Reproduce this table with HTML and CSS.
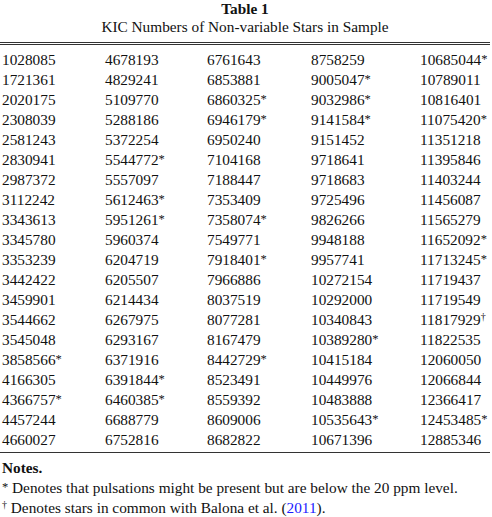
FILE: index.html
```html
<!DOCTYPE html>
<html>
<head>
<meta charset="utf-8">
<link rel="stylesheet" href="styles.css">
</head>
<body>
<div class="table-wrap">
  <div class="caption">
    <div class="cap-title">Table 1</div>
    <div class="cap-sub">KIC Numbers of Non-variable Stars in Sample</div>
  </div>
  <div class="rule-double"></div>
  <div class="grid">
    <span>1028085</span><span>4678193</span><span>6761643</span><span>8758259</span><span>10685044<sup class="ast">*</sup></span>
    <span>1721361</span><span>4829241</span><span>6853881</span><span>9005047<sup class="ast">*</sup></span><span>10789011</span>
    <span>2020175</span><span>5109770</span><span>6860325<sup class="ast">*</sup></span><span>9032986<sup class="ast">*</sup></span><span>10816401</span>
    <span>2308039</span><span>5288186</span><span>6946179<sup class="ast">*</sup></span><span>9141584<sup class="ast">*</sup></span><span>11075420<sup class="ast">*</sup></span>
    <span>2581243</span><span>5372254</span><span>6950240</span><span>9151452</span><span>11351218</span>
    <span>2830941</span><span>5544772<sup class="ast">*</sup></span><span>7104168</span><span>9718641</span><span>11395846</span>
    <span>2987372</span><span>5557097</span><span>7188447</span><span>9718683</span><span>11403244</span>
    <span>3112242</span><span>5612463<sup class="ast">*</sup></span><span>7353409</span><span>9725496</span><span>11456087</span>
    <span>3343613</span><span>5951261<sup class="ast">*</sup></span><span>7358074<sup class="ast">*</sup></span><span>9826266</span><span>11565279</span>
    <span>3345780</span><span>5960374</span><span>7549771</span><span>9948188</span><span>11652092<sup class="ast">*</sup></span>
    <span>3353239</span><span>6204719</span><span>7918401<sup class="ast">*</sup></span><span>9957741</span><span>11713245<sup class="ast">*</sup></span>
    <span>3442422</span><span>6205507</span><span>7966886</span><span>10272154</span><span>11719437</span>
    <span>3459901</span><span>6214434</span><span>8037519</span><span>10292000</span><span>11719549</span>
    <span>3544662</span><span>6267975</span><span>8077281</span><span>10340843</span><span>11817929<sup class="dag">†</sup></span>
    <span>3545048</span><span>6293167</span><span>8167479</span><span>10389280<sup class="ast">*</sup></span><span>11822535</span>
    <span>3858566<sup class="ast">*</sup></span><span>6371916</span><span>8442729<sup class="ast">*</sup></span><span>10415184</span><span>12060050</span>
    <span>4166305</span><span>6391844<sup class="ast">*</sup></span><span>8523491</span><span>10449976</span><span>12066844</span>
    <span>4366757<sup class="ast">*</sup></span><span>6460385<sup class="ast">*</sup></span><span>8559392</span><span>10483888</span><span>12366417</span>
    <span>4457244</span><span>6688779</span><span>8609006</span><span>10535643<sup class="ast">*</sup></span><span>12453485<sup class="ast">*</sup></span>
    <span>4660027</span><span>6752816</span><span>8682822</span><span>10671396</span><span>12885346</span>
  </div>
  <div class="rule-single"></div>
  <div class="notes">
    <div class="notes-title">Notes.</div>
    <div class="note"><sup class="ast">*</sup> Denotes that pulsations might be present but are below the 20 ppm level.</div>
    <div class="note"><sup class="dag">†</sup> Denotes stars in common with Balona et al. (<span class="cite">2011</span>).</div>
  </div>
</div>
</body>
</html>
```
FILE: styles.css
```css
html, body {
  margin: 0;
  padding: 0;
  background: #fff;
}
body {
  font-family: "Liberation Serif", "Times New Roman", serif;
  font-size: 15.3px;
  color: #111;
}
.table-wrap {
  width: 490px;
}
.caption {
  text-align: center;
  line-height: 17.5px;
}
.cap-title {
  font-weight: bold;
}
.rule-double {
  margin-top: 7px;
  height: 1px;
  border-top: 1px solid #333;
  border-bottom: 1px solid #333;
}
.grid {
  display: grid;
  grid-template-columns: 103px 102px 104px 109px 1fr;
  padding: 5px 0 2px 2px;
  line-height: 20px;
}
.grid span {
  white-space: nowrap;
}
sup {
  line-height: 0;
}
.ast {
  font-size: 12.5px;
  vertical-align: 2px;
}
.dag {
  font-size: 10px;
  vertical-align: 5px;
}
.rule-single {
  border-top: 1px solid #333;
}
.notes {
  padding: 5px 0 0 2px;
  line-height: 20px;
}
.notes-title {
  font-weight: bold;
}
.cite {
  color: #1a1aff;
}
```
